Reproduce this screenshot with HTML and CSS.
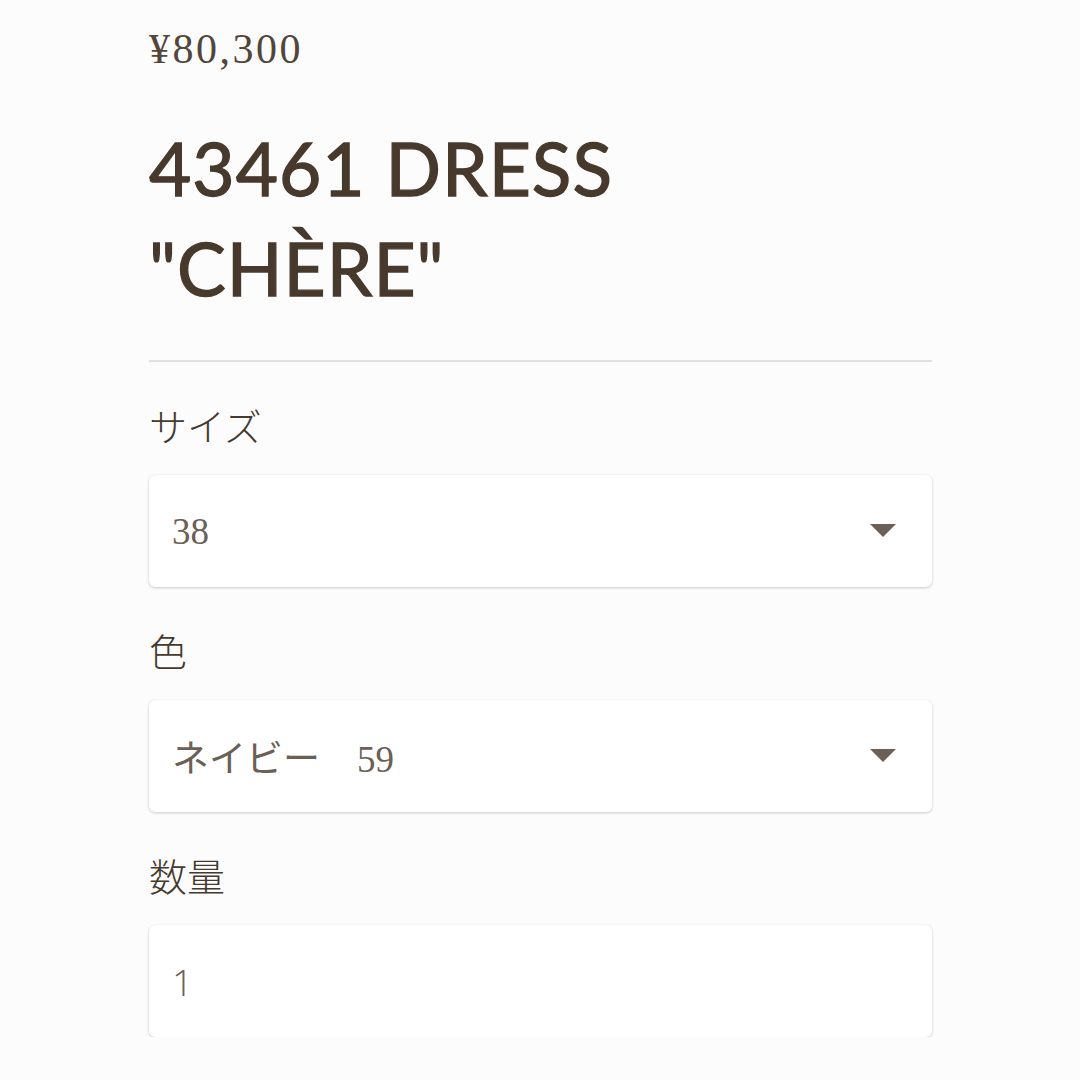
FILE: index.html
```html
<!DOCTYPE html>
<html lang="ja">
<head>
<meta charset="utf-8">
<link rel="stylesheet" href="styles.css">
</head>
<body>
<main class="product">
  <p class="price">¥80,300</p>
  <h1 class="title">43461 DRESS<br>"CHÈRE"</h1>
  <hr class="divider">
  <div class="field">
    <label class="label">サイズ</label>
    <div class="select">
      <span class="value">38</span>
      <svg class="caret" width="26" height="14" viewBox="0 0 26 14"><path d="M0 0 H26 L13 13 Z" fill="#6b5f56"/></svg>
    </div>
  </div>
  <div class="field">
    <label class="label">色</label>
    <div class="select">
      <span class="value">ネイビー　59</span>
      <svg class="caret" width="26" height="14" viewBox="0 0 26 14"><path d="M0 0 H26 L13 13 Z" fill="#6b5f56"/></svg>
    </div>
  </div>
  <div class="field">
    <label class="label">数量</label>
    <div class="select">
      <span class="value qty">1</span>
    </div>
  </div>
</main>
</body>
</html>
```
FILE: styles.css
```css
html, body {
  margin: 0;
  padding: 0;
  background: #fcfcfc;
}
.product {
  width: 783px;
  margin-left: 149px;
  padding-top: 25px;
  display: flex;
  flex-direction: column;
  color: #4a3b2e;
}
.price {
  margin: 0;
  font-family: "Liberation Serif", serif;
  font-size: 42px;
  line-height: 48px;
  letter-spacing: 2.5px;
  color: #52453a;
}
.title {
  margin: 45px 0 0 0;
  font-family: "Lato", sans-serif;
  font-weight: 400;
  font-size: 73px;
  line-height: 100px;
  letter-spacing: 1px;
  -webkit-text-stroke: 1.3px #47392c;
  color: #47392c;
}
.divider {
  margin: 42px 0 0 0;
  border: 0;
  height: 2px;
  background: #e2e0de;
}
.field {
  display: flex;
  flex-direction: column;
}
.label {
  margin-top: 41px;
  font-family: "Noto Sans CJK JP", sans-serif;
  font-weight: 300;
  font-size: 38px;
  line-height: 44px;
  color: #463a2e;
}
.select {
  margin-top: 28px;
  height: 112px;
  box-sizing: border-box;
  background: #fff;
  border-radius: 6px;
  box-shadow: 0 1px 3px rgba(0,0,0,0.2), 0 0 1px rgba(0,0,0,0.06);
  display: flex;
  align-items: center;
  justify-content: space-between;
  padding: 0 36px 0 23px;
}
.value {
  font-family: "Liberation Serif", "Noto Sans CJK JP", serif;
  font-size: 37px;
  color: #6b5f56;
}
.qty {
  font-family: "Open Sans", sans-serif;
  font-weight: 300;
}
.caret {
  display: block;
}
```
